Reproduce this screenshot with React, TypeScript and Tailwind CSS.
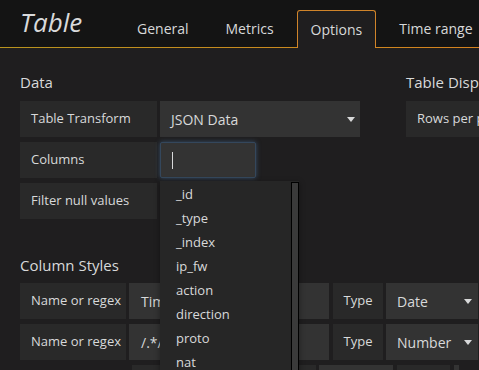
const font = { fontFamily: '"Open Sans", "Noto Sans", sans-serif' };

const tabs = ["General", "Metrics", "Options", "Time range"];
const fields = ["_id", "_type", "_index", "ip_fw", "action", "direction", "proto", "nat", "src"];

function Caret() {
  return (
    <svg width="8" height="5" viewBox="0 0 8 5" className="shrink-0">
      <path d="M0 0 L8 0 L4 5 Z" fill="#d8d9da" />
    </svg>
  );
}

function Label({ children, w }: { children: React.ReactNode; w: string }) {
  return (
    <div
      className={`flex h-full shrink-0 items-center whitespace-nowrap bg-[#292929] px-[11px] text-[13px] text-[#d8d9da] ${w}`}
    >
      {children}
    </div>
  );
}

export default function App() {
  return (
    <div
      style={font}
      className="relative h-[370px] w-[479px] overflow-hidden bg-[#1f1e1f] text-[#d8d9da]"
    >
      {/* header */}
      <div className="relative flex h-[48px] items-end bg-[#141414]">
        <div className="absolute bottom-0 left-0 right-0 h-px bg-gradient-to-r from-[#b8941e] to-[#d5821f]" />
        <div className="w-[123px] shrink-0 self-start pl-[20px] pt-[3px] text-[26px] italic text-[#d8d9da]">
          Table
        </div>
        <div className="flex shrink-0 gap-[9px]">
          {tabs.map((t) =>
            t === "Options" ? (
              <div
                key={t}
                className="relative z-10 flex h-[38px] shrink-0 items-center rounded-t-[3px] border border-b-0 border-[#d0842a] bg-[#1f1e1f] px-[13px] text-[14px]"
              >
                {t}
              </div>
            ) : (
              <div
                key={t}
                className="flex h-[38px] shrink-0 items-center whitespace-nowrap px-[14px] pb-[2px] text-[14px]"
              >
                {t}
              </div>
            )
          )}
        </div>
      </div>

      {/* body */}
      <div className="px-[20px] pt-[24px]">
        <div className="flex gap-[46px]">
          <div className="w-[340px] shrink-0">
            <div className="h-[29px] text-[15px] leading-[20px]">Data</div>
            <div className="flex flex-col gap-[5px]">
              <div className="flex h-[36px] gap-[3px]">
                <Label w="w-[137px]">Table Transform</Label>
                <div className="flex w-[200px] shrink-0 items-center justify-between bg-[#333333] pl-[11px] pr-[5px] text-[14px]">
                  <span>JSON Data</span>
                  <Caret />
                </div>
              </div>
              <div className="flex h-[36px] gap-[3px]">
                <Label w="w-[137px]">Columns</Label>
                <div className="relative w-[96px] shrink-0">
                  <div className="flex h-full items-center rounded-[2px] border border-[#34475c] bg-[#333333] pl-[11px] shadow-[0_0_5px_rgba(82,130,180,0.5)]">
                    <div className="h-[17px] w-px bg-[#d8d9da]" />
                  </div>
                  <div className="absolute left-0 top-[39px] z-20 h-[200px] w-[139px] bg-[#262626] shadow-[0_2px_6px_rgba(0,0,0,0.4)]">
                    <div className="pl-[16px] pt-[1px]">
                      {fields.map((f) => (
                        <div key={f} className="h-[24px] text-[13px] leading-[24px]">
                          {f}
                        </div>
                      ))}
                    </div>
                    <div className="absolute bottom-0 right-0 top-[1px] w-[8px] border border-black bg-[#3a3a3a]" />
                  </div>
                </div>
              </div>
              <div className="flex h-[36px] gap-[3px]">
                <Label w="w-[137px]">Filter null values</Label>
              </div>
            </div>
          </div>
          <div className="min-w-0 flex-1">
            <div className="h-[29px] whitespace-nowrap text-[15px] leading-[20px]">Table Display</div>
            <div className="flex h-[36px]">
              <div className="flex h-full w-[200px] shrink-0 items-center whitespace-nowrap bg-[#292929] px-[11px] text-[13px]">
                Rows per page
              </div>
            </div>
          </div>
        </div>

        <div className="mt-[36px] h-[28px] text-[15px] leading-[20px]">Column Styles</div>
        <div className="flex flex-col gap-[5px]">
          <div className="flex h-[36px]">
            <Label w="w-[106px]">Name or regex</Label>
            <div className="ml-[3px] flex w-[200px] shrink-0 items-center bg-[#333333] px-[12px] text-[14px]">Time</div>
            <div className="ml-[4px] flex w-[50px] shrink-0 items-center justify-center bg-[#292929] text-[13px]">Type</div>
            <div className="ml-[3px] flex w-[92px] shrink-0 items-center justify-between bg-[#333333] pl-[11px] pr-[6px] text-[14px]">
              <span>Date</span>
              <Caret />
            </div>
          </div>
          <div className="flex h-[36px]">
            <Label w="w-[106px]">Name or regex</Label>
            <div className="ml-[3px] flex w-[200px] shrink-0 items-center bg-[#333333] px-[12px] text-[14px]">/.*/</div>
            <div className="ml-[4px] flex w-[50px] shrink-0 items-center justify-center bg-[#292929] text-[13px]">Type</div>
            <div className="ml-[3px] flex w-[92px] shrink-0 items-center justify-between bg-[#333333] pl-[11px] pr-[6px] text-[14px]">
              <span>Number</span>
              <Caret />
            </div>
          </div>
          <div className="flex h-[36px] pl-[112px]">
            <div className="w-[184px] shrink-0 bg-[#292929]" />
            <div className="ml-[3px] w-[74px] shrink-0 bg-[#333333]" />
            <div className="ml-[4px] w-[53px] shrink-0 bg-[#292929]" />
            <div className="ml-[4px] flex-1 bg-[#333333]" />
          </div>
        </div>
      </div>
    </div>
  );
}
